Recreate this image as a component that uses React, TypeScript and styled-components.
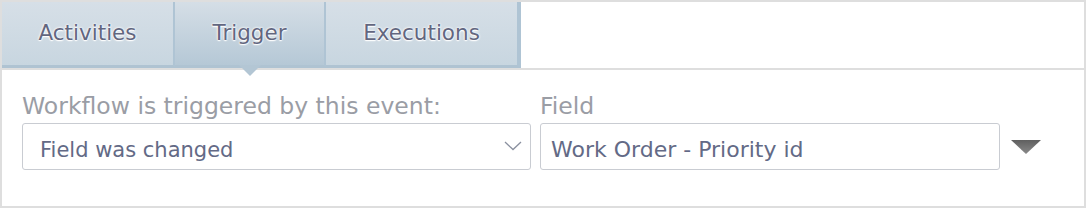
import React from "react";
import styled, { createGlobalStyle } from "styled-components";

const GlobalStyle = createGlobalStyle`
  html, body {
    margin: 0;
    padding: 0;
    background: #ffffff;
  }
  body {
    font-family: "DejaVu Sans", Verdana, sans-serif;
  }
`;

const Frame = styled.div`
  box-sizing: border-box;
  width: 1086px;
  height: 208px;
  border: 2px solid #dedede;
  display: flex;
  flex-direction: column;
`;

const TabBar = styled.div`
  display: flex;
  height: 66px;
  border-bottom: 2px solid #dedede;
`;

const Tab = styled.div<{ $width: number; $active?: boolean; $last?: boolean }>`
  position: relative;
  box-sizing: border-box;
  width: ${(p) => p.$width}px;
  display: flex;
  align-items: center;
  justify-content: center;
  padding-bottom: 3px;
  border-bottom: 3px solid #afc3d2;
  border-right: ${(p) => (p.$last ? 4 : 2)}px solid #afc4d4;
  background: ${(p) =>
    p.$active
      ? "linear-gradient(#d5dee6, #b5c8d6)"
      : "linear-gradient(#d6dfe7, #c8d6e0)"};
  color: #62667f;
  font-size: 21.5px;
  text-shadow: 0 0 3px #ffffff, 0 0 2px #ffffff, 0 1px 1px #ffffff;

  ${(p) =>
    p.$active &&
    `
    &::after {
      content: "";
      position: absolute;
      left: 50%;
      top: 100%;
      margin-left: -11px;
      border-left: 11px solid transparent;
      border-right: 11px solid transparent;
      border-top: 11px solid #b3c6d4;
    }
  `}
`;

const Body = styled.div`
  padding: 23px 0 0 20px;
`;

const Row = styled.div`
  display: flex;
  align-items: flex-end;
  gap: 9px;
`;

const Field = styled.div<{ $width: number }>`
  width: ${(p) => p.$width}px;
  display: flex;
  flex-direction: column;
  gap: 3px;
`;

const Label = styled.div`
  color: #9a9da5;
  font-size: 23.5px;
  line-height: 27px;
  white-space: nowrap;
`;

const Box = styled.div<{ $pad: number; $size: number }>`
  box-sizing: border-box;
  height: 47px;
  border: 1px solid #c9ccd2;
  border-radius: 3px;
  display: flex;
  align-items: center;
  justify-content: space-between;
  padding: 6px 8px 0 ${(p) => p.$pad}px;
  color: #636a86;
  font-size: ${(p) => p.$size}px;
`;

const Chevron = styled.svg`
  margin-top: -8px;
`;

const CaretBox = styled.div`
  height: 47px;
  display: flex;
  align-items: center;
  margin-left: 1px;
  margin-top: -6px;
`;

export default function App() {
  return (
    <>
      <GlobalStyle />
      <Frame>
        <TabBar>
          <Tab $width={173}>Activities</Tab>
          <Tab $width={151} $active>
            Trigger
          </Tab>
          <Tab $width={195} $last>
            Executions
          </Tab>
        </TabBar>
        <Body>
          <Row>
            <Field $width={509}>
              <Label>Workflow is triggered by this event:</Label>
              <Box $pad={17} $size={21}>
                <span>Field was changed</span>
                <Chevron width="18" height="10" viewBox="0 0 18 10">
                  <polyline
                    points="1,1 9,8.5 17,1"
                    fill="none"
                    stroke="#8a909f"
                    strokeWidth="1.3"
                  />
                </Chevron>
              </Box>
            </Field>
            <Field $width={460}>
              <Label>Field</Label>
              <Box $pad={10} $size={22}>
                <span>Work Order - Priority id</span>
              </Box>
            </Field>
            <CaretBox>
              <svg width="32" height="16" viewBox="0 0 32 16">
                <defs>
                  <linearGradient id="caret" x1="0" y1="0" x2="0" y2="1">
                    <stop offset="0" stopColor="#5f5f5f" />
                    <stop offset="1" stopColor="#8a8a8a" />
                  </linearGradient>
                </defs>
                <polygon points="1,1 31,1 16,15" fill="url(#caret)" />
              </svg>
            </CaretBox>
          </Row>
        </Body>
      </Frame>
    </>
  );
}
